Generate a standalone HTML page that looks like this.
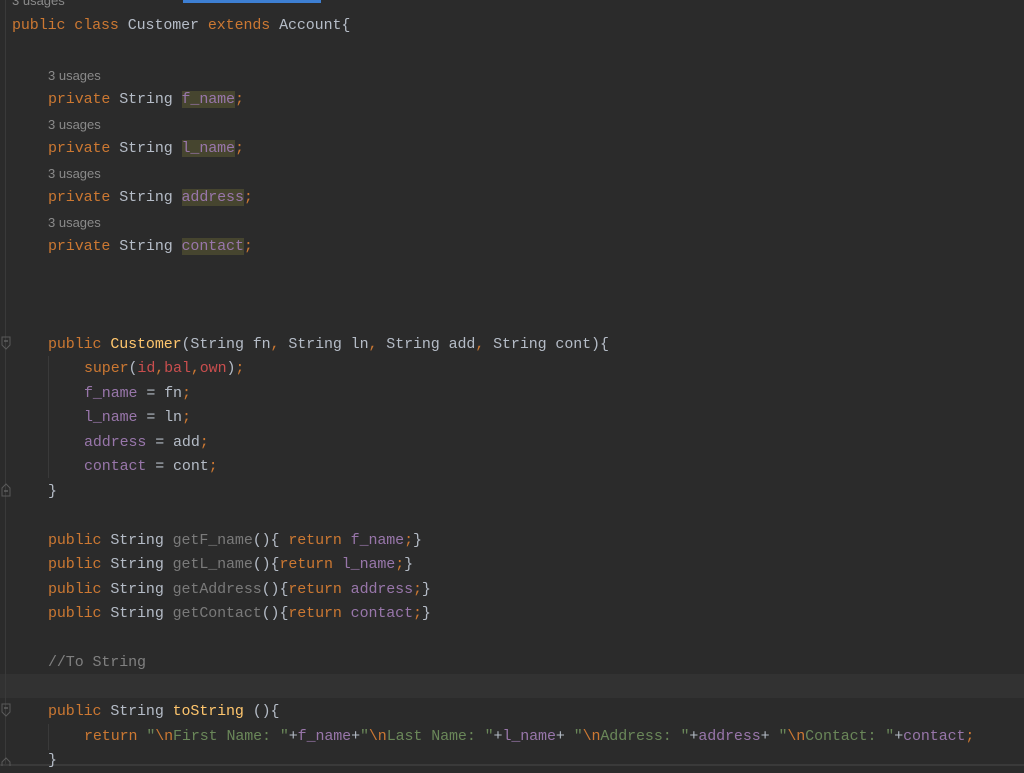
<!DOCTYPE html>
<html><head><meta charset="utf-8"><style>
body{margin:0;width:1024px;height:766px;background:#2b2b2b;overflow:hidden;position:relative;font-family:"Liberation Mono",monospace;font-size:15px;color:#b5bcc7}
.w{position:absolute;left:0;top:1.5px;width:1024px;height:766px}
.r{position:absolute;left:12px;height:24.5px;line-height:24.5px;white-space:pre;letter-spacing:-0.1px}
.u{font-family:"Liberation Sans",sans-serif;font-size:13px;color:#8a8a8a;letter-spacing:0}
.k{color:#cc7832}.f{color:#9876aa}.s{color:#6a8759}.m{color:#ffc66d}.g{color:#7a7a7a}.c{color:#808080}.e{color:#c94e4e}
.h{background:#46452f}
</style></head><body>
<div style="position:absolute;left:0;top:674px;width:1024px;height:24px;background:#323232"></div>
<div style="position:absolute;left:183px;top:0;width:138px;height:3px;background:#3d7fd3"></div>
<div style="position:absolute;left:5px;top:0;width:1px;height:766px;background:#3a3a3a"></div>
<div style="position:absolute;left:48px;top:356px;width:1px;height:122px;background:#3a3a3a"></div>
<div style="position:absolute;left:48px;top:724px;width:1px;height:26px;background:#3a3a3a"></div>
<div style="position:absolute;left:0;top:764px;width:1024px;height:2px;background:#3a3a3a"></div>
<svg style="position:absolute;left:0;top:0" width="14" height="766"><g fill="none" stroke="#5a5a5a"><path d="M2 337h8v8l-4 4l-4-4z"/><path d="M2 496h8v-8l-4-4l-4 4z"/><path d="M2 704h8v8l-4 4l-4-4z"/><path d="M2 766v-4l4-4l4 4v4"/></g><path d="M4 341h4M4 491h4M4 708h4" stroke="#777"/></svg>
<div class="w">
<div class="r u" style="top:-13px;left:12px">3 usages</div>
<div class="r" style="top:12px"><span class="k">public class </span>Customer <span class="k">extends </span>Account{</div>
<div class="r u" style="top:62px;left:48px">3 usages</div>
<div class="r" style="top:86px;left:48px"><span class="k">private </span>String <span class="f h">f_name</span><span class="k">;</span></div>
<div class="r u" style="top:111px;left:48px">3 usages</div>
<div class="r" style="top:135px;left:48px"><span class="k">private </span>String <span class="f h">l_name</span><span class="k">;</span></div>
<div class="r u" style="top:160px;left:48px">3 usages</div>
<div class="r" style="top:184px;left:48px"><span class="k">private </span>String <span class="f h">address</span><span class="k">;</span></div>
<div class="r u" style="top:209px;left:48px">3 usages</div>
<div class="r" style="top:233px;left:48px"><span class="k">private </span>String <span class="f h">contact</span><span class="k">;</span></div>
<div class="r" style="top:331px;left:48px"><span class="k">public </span><span class="m">Customer</span>(String fn<span class="k">, </span>String ln<span class="k">, </span>String add<span class="k">, </span>String cont){</div>
<div class="r" style="top:355px;left:84px"><span class="k">super</span>(<span class="e">id</span><span class="k">,</span><span class="e">bal</span><span class="k">,</span><span class="e">own</span>)<span class="k">;</span></div>
<div class="r" style="top:380px;left:84px"><span class="f">f_name</span> = fn<span class="k">;</span></div>
<div class="r" style="top:404px;left:84px"><span class="f">l_name</span> = ln<span class="k">;</span></div>
<div class="r" style="top:429px;left:84px"><span class="f">address</span> = add<span class="k">;</span></div>
<div class="r" style="top:453px;left:84px"><span class="f">contact</span> = cont<span class="k">;</span></div>
<div class="r" style="top:478px;left:48px">}</div>
<div class="r" style="top:527px;left:48px"><span class="k">public </span>String <span class="g">getF_name</span>(){ <span class="k">return </span><span class="f">f_name</span><span class="k">;</span>}</div>
<div class="r" style="top:551px;left:48px"><span class="k">public </span>String <span class="g">getL_name</span>(){<span class="k">return </span><span class="f">l_name</span><span class="k">;</span>}</div>
<div class="r" style="top:576px;left:48px"><span class="k">public </span>String <span class="g">getAddress</span>(){<span class="k">return </span><span class="f">address</span><span class="k">;</span>}</div>
<div class="r" style="top:600px;left:48px"><span class="k">public </span>String <span class="g">getContact</span>(){<span class="k">return </span><span class="f">contact</span><span class="k">;</span>}</div>
<div class="r c" style="top:649px;left:48px">//To String</div>
<div class="r" style="top:698px;left:48px"><span class="k">public </span>String <span class="m">toString</span> (){</div>
<div class="r" style="top:723px;left:84px"><span class="k">return </span><span class="s">"<span class="k">\n</span>First Name: "</span>+<span class="f">f_name</span>+<span class="s">"<span class="k">\n</span>Last Name: "</span>+<span class="f">l_name</span>+ <span class="s">"<span class="k">\n</span>Address: "</span>+<span class="f">address</span>+ <span class="s">"<span class="k">\n</span>Contact: "</span>+<span class="f">contact</span><span class="k">;</span></div>
<div class="r" style="top:747px;left:48px">}</div>
</div>
</body></html>
